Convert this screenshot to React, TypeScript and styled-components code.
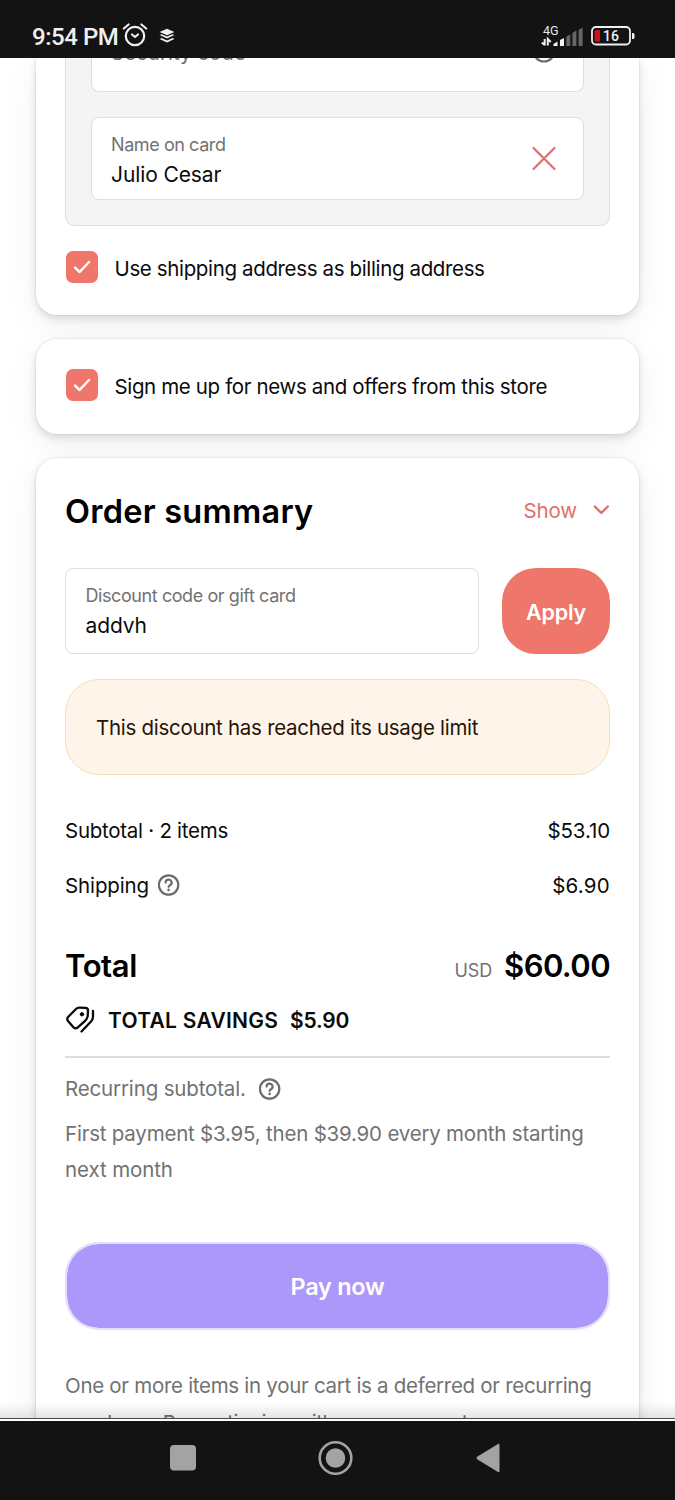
import React from "react";
import styled, { createGlobalStyle } from "styled-components";

const GlobalStyle = createGlobalStyle`
  * { box-sizing: border-box; }
  body { margin: 0; background: #fff; font-family: Inter, "Liberation Sans", sans-serif; color: #0b0b0b; }
  button { font-family: inherit; border: 0; padding: 0; cursor: pointer; }
  svg { display: block; flex: none; }
`;

const Screen = styled.div`
  width: 675px;
  height: 1500px;
  display: flex;
  flex-direction: column;
  overflow: hidden;
  background: #fff;
`;

const StatusBar = styled.header`
  height: 58px;
  flex: none;
  background: #131313;
  color: #f0f0f0;
  display: flex;
  align-items: flex-start;
  justify-content: space-between;
  padding: 22px 40px 0 32px;
  font-family: Roboto, sans-serif;
`;

const StatusGroup = styled.div`
  display: flex;
  align-items: flex-start;
`;

const Clock = styled.span`
  font-size: 24px;
  line-height: 30px;
  font-weight: 500;
  width: 90px;
  white-space: nowrap;
  letter-spacing: -0.45px;
`;

const Content = styled.main`
  position: relative;
  height: 1361px;
  flex: none;
  overflow: hidden;
  display: flex;
  flex-direction: column;
  gap: 24px;
  padding: 0 36px;
  border-bottom: 1px solid #4a4a4a;

  &::after {
    content: "";
    position: absolute;
    left: 0;
    right: 0;
    bottom: 0;
    height: 16px;
    background: linear-gradient(rgba(0, 0, 0, 0), rgba(0, 0, 0, 0.1));
  }
`;

const Card = styled.section<{ $h: number; $cut?: "top" | "bottom" }>`
  height: ${(p) => p.$h}px;
  flex: none;
  background: #fff;
  padding: 0 29px;
  border-radius: ${(p) => (p.$cut === "top" ? "0 0 21px 21px" : p.$cut === "bottom" ? "21px 21px 0 0" : "21px")};
  box-shadow: 0 0 1px 1px rgba(0, 0, 0, 0.05), 0 4px 9px rgba(0, 0, 0, 0.12), 0 8px 36px rgba(0, 0, 0, 0.06);
`;

const CardPanel = styled.div`
  height: 168px;
  padding: 0 25px 25px;
  background: #f4f4f4;
  border: 1px solid #dedede;
  border-top: 0;
  border-radius: 0 0 9px 9px;
  display: flex;
  flex-direction: column;
  gap: 25px;
`;

const Field = styled.div<{ $h: number; $cut?: boolean }>`
  height: ${(p) => p.$h}px;
  flex: ${(p) => (p.$cut ? "none" : "1 1 auto")};
  display: flex;
  align-items: ${(p) => (p.$cut ? "flex-start" : "center")};
  justify-content: space-between;
  padding: 0 26px 0 19px;
  background: #fff;
  border: 1px solid #dedede;
  border-top-width: ${(p) => (p.$cut ? 0 : 1)}px;
  border-radius: ${(p) => (p.$cut ? "0 0 8px 8px" : "8px")};
  overflow: hidden;
`;

const Placeholder = styled.span`
  font-size: 20.5px;
  line-height: 24px;
  margin-top: -17px;
  color: #6d6d6d;
`;

const FieldText = styled.div`
  display: flex;
  flex-direction: column;
  padding-top: 5px;
`;

const FieldLabel = styled.span`
  font-size: 18px;
  line-height: 26px;
  color: #727272;
  letter-spacing: -0.42px;
`;

const FieldValue = styled.span`
  font-size: 21px;
  line-height: 33px;
  letter-spacing: -0.1px;
`;

const CheckRow = styled.label<{ $top: number }>`
  display: flex;
  align-items: center;
  gap: 16.5px;
  padding: ${(p) => p.$top}px 0 0 1px;
`;

const CheckBox = styled.span`
  width: 32px;
  height: 32px;
  border-radius: 7px;
  background: #f0766b;
  display: grid;
  place-items: center;
`;

const CheckLabel = styled.span`
  font-size: 20.5px;
  line-height: 28px;
  padding-top: 4px;
  white-space: nowrap;
  letter-spacing: -0.36px;
`;

const SummaryHead = styled.div`
  height: 110px;
  display: flex;
  justify-content: space-between;
  padding-top: 33px;
`;

const Title = styled.h2`
  margin: 0;
  font-size: 32.5px;
  line-height: 42px;
  font-weight: 600;
  letter-spacing: 0.25px;
  color: #000;
`;

const ShowButton = styled.button`
  height: 38px;
  background: none;
  color: #e0706b;
  font-size: 20.5px;
  letter-spacing: -0.1px;
  display: flex;
  align-items: center;
  gap: 16px;
`;

const DiscountRow = styled.div`
  display: flex;
  gap: 23px;
  height: 86px;
`;

const DiscountField = styled(Field)`
  width: 414px;
  flex: none;
  padding-left: 19.5px;
  padding-bottom: 2px;
`;

const ApplyButton = styled.button`
  flex: 1;
  border-radius: 34px;
  background: #ee766a;
  color: #fff;
  font-size: 21.5px;
  font-weight: 600;
  letter-spacing: -0.2px;
  padding-top: 1px;
`;

const Notice = styled.div`
  height: 96px;
  margin-top: 25px;
  border: 1px solid #f6dfb9;
  border-radius: 34px;
  background: #fff4ea;
  color: #241506;
  display: flex;
  align-items: center;
  padding: 0 30px;
  font-size: 20.5px;
  letter-spacing: -0.28px;
  white-space: nowrap;
`;

const CostRow = styled.div<{ $mt?: number }>`
  height: 30px;
  margin-top: ${(p) => p.$mt ?? 25}px;
  display: flex;
  align-items: center;
  justify-content: space-between;
  font-size: 20.5px;
`;

const CostLabel = styled.span<{ $ls?: number }>`
  display: flex;
  align-items: center;
  gap: 9px;
  letter-spacing: ${(p) => p.$ls ?? 0}px;
`;

const CostValue = styled.span<{ $ls: number }>`
  letter-spacing: ${(p) => p.$ls}px;
`;

const TotalRow = styled.div`
  height: 44px;
  margin-top: 44px;
  display: flex;
  align-items: baseline;
  justify-content: space-between;
  font-weight: 600;
  color: #000;
`;

const TotalLabel = styled.span`
  font-size: 31px;
  line-height: 44px;
  letter-spacing: -0.4px;
`;

const TotalAmount = styled.span`
  display: flex;
  align-items: baseline;
  gap: 12px;
  font-size: 31px;
  line-height: 44px;
  letter-spacing: -0.6px;
`;

const Currency = styled.span`
  font-size: 18px;
  font-weight: 400;
  letter-spacing: -0.1px;
  color: #727272;
`;

const Savings = styled.div`
  height: 30px;
  margin-top: 16px;
  display: flex;
  align-items: center;
  font-size: 21px;
  font-weight: 600;
  white-space: nowrap;
`;

const SavingsLabel = styled.span`
  margin: 2px 12px 0 13px;
  letter-spacing: 0.26px;
`;

const SavingsValue = styled.span`
  margin-top: 2px;
  letter-spacing: -0.2px;
`;

const Divider = styled.hr`
  margin: 22px 0 0;
  border: 0;
  height: 1.5px;
  background: #dedede;
`;

const Recurring = styled.div`
  height: 30px;
  margin-top: 16px;
  display: flex;
  align-items: center;
  gap: 13px;
  font-size: 20.5px;
  letter-spacing: -0.15px;
  color: #727272;
`;

const Paragraph = styled.p<{ $mt: number }>`
  margin: ${(p) => p.$mt}px 0 0;
  font-size: 20.5px;
  line-height: 36px;
  color: #727272;
  white-space: nowrap;
`;

const Line = styled.span<{ $ls: number; $mt?: number }>`
  display: block;
  margin-top: ${(p) => p.$mt ?? 0}px;
  letter-spacing: ${(p) => p.$ls}px;
`;

const PayButton = styled.button`
  display: block;
  width: 545px;
  height: 88px;
  margin-top: 54px;
  border: 2px solid #e4defc;
  border-radius: 34px;
  background: #ac98fa;
  background-clip: padding-box;
  color: #fff;
  font-size: 23.5px;
  font-weight: 600;
  letter-spacing: -0.25px;
`;

const NavBar = styled.nav`
  flex: 1;
  margin-top: 2px;
  background: #131313;
  display: flex;
  align-items: center;
  padding: 0 175px 6px 170px;
  justify-content: space-between;
`;

const Check = () => (
  <svg width="18" height="14" viewBox="0 0 18 14" fill="none" stroke="#fff" strokeWidth="2.5" strokeLinecap="round" strokeLinejoin="round">
    <path d="M2 7.6 6.6 12 16 2" />
  </svg>
);

const Help = () => (
  <svg width="22" height="22" viewBox="0 0 22 22" fill="none" stroke="#6d6d6d" strokeWidth="2.2" strokeLinecap="round" strokeLinejoin="round">
    <circle cx="10.6" cy="11" r="9.7" />
    <path d="M7.6 8.6a3 3 0 1 1 4.4 2.6c-.9.5-1.4.8-1.4 1.6" />
    <circle cx="10.6" cy="15.9" r="1.3" fill="#6d6d6d" stroke="none" />
  </svg>
);

const AlarmIcon = () => (
  <svg width="26" height="26" viewBox="0 0 26 26" fill="none" stroke="#f0f0f0" strokeWidth="2.2" strokeLinecap="round" strokeLinejoin="round">
    <circle cx="13" cy="14" r="9.2" />
    <path d="M10 12.5 13 15l3-2.5M1.8 6.5 6.6 2.5M24.2 6.5l-4.800-4" />
  </svg>
);

const LayersIcon = () => (
  <svg width="16" height="16" viewBox="0 0 16 16" fill="#f0f0f0">
    <path d="M8 .8 15.4 4 8 7.2.6 4z" />
    <path d="M.6 7 2.600 6.200 8 8.600l5.400-2.400 2 .8L8 10.600z" />
    <path d="M.6 11 2.600 10.100 8 12.500l5.400-2.400 2 .9L8 14.600z" />
  </svg>
);

const Signal = () => (
  <svg width="42" height="26" viewBox="0 0 42 26">
    <text x="2" y="10.5" fontFamily="Roboto, sans-serif" fontSize="12.5" fill="#e8e8e8">4G</text>
    <g fill="none" stroke="#f0f0f0" strokeWidth="2">
      <path d="M3.700 15v6.500M.8 18.500l2.900 2.500M6.800 21.500V15l2.900 3" />
    </g>
    <path d="M12.500 22v-2l4-2.500V22z" fill="#f4f4f4" />
    <path d="M19 22v-6l4-2v8z" fill="#f4f4f4" />
    <path d="M25.300 22v-9.500l4-2V22zM31.400 22V9l4-2.500V22zM37.600 22V6l4-2.500V22z" fill="#666" />
  </svg>
);

const Battery = () => (
  <svg width="44" height="20" viewBox="0 0 44 20">
    <rect x="1" y="1" width="38" height="17.500" rx="4" fill="none" stroke="#f0f0f0" strokeWidth="1.800" />
    <path d="M41 7h1a1.500 1.500 0 0 1 1.500 1.500v3A1.500 1.500 0 0 1 42 13h-1z" fill="#f0f0f0" />
    <path d="M5 4h4v11.500H5a1.500 1.500 0 0 1-1.500-1.500V5.500A1.500 1.500 0 0 1 5 4z" fill="#cf1019" />
    <text x="12" y="15" fontFamily="Roboto, sans-serif" fontSize="14" fontWeight="500" fill="#f0f0f0">16</text>
  </svg>
);

const AlarmSlot = styled.span`
  margin: 0 11px 0 0;
`;
const LayerSlot = styled.span`
  margin-top: 6px;
`;
const SignalSlot = styled.span`
  margin: 1.5px 8px 0 0;
`;
const BatterySlot = styled.span`
  margin-top: 4px;
`;
const InfoSlot = styled.span`
  margin: -19px 0 0;
`;

export default function App() {
  return (
    <Screen>
      <GlobalStyle />
      <StatusBar>
        <StatusGroup>
          <Clock>9:54 PM</Clock>
          <AlarmSlot><AlarmIcon /></AlarmSlot>
          <LayerSlot><LayersIcon /></LayerSlot>
        </StatusGroup>
        <StatusGroup>
          <SignalSlot><Signal /></SignalSlot>
          <BatterySlot><Battery /></BatterySlot>
        </StatusGroup>
      </StatusBar>

      <Content>
        <Card $h={257} $cut="top">
          <CardPanel>
            <Field $h={34} $cut>
              <Placeholder>Security code</Placeholder>
              <InfoSlot>
                <svg width="26" height="24" viewBox="0 0 26 24" fill="none" stroke="#6d6d6d" strokeWidth="2.2">
                  <circle cx="13" cy="12" r="10.5" />
                </svg>
              </InfoSlot>
            </Field>
            <Field $h={84}>
              <FieldText>
                <FieldLabel>Name on card</FieldLabel>
                <FieldValue>Julio Cesar</FieldValue>
              </FieldText>
              <svg width="26" height="26" viewBox="0 0 26 26" stroke="#e0706b" strokeWidth="2.3" strokeLinecap="round">
                <path d="M2.500 2l21 21M23.500 2l-21 21" />
              </svg>
            </Field>
          </CardPanel>
          <CheckRow $top={25}>
            <CheckBox><Check /></CheckBox>
            <CheckLabel>Use shipping address as billing address</CheckLabel>
          </CheckRow>
        </Card>

        <Card $h={95}>
          <CheckRow $top={30}>
            <CheckBox><Check /></CheckBox>
            <CheckLabel>Sign me up for news and offers from this store</CheckLabel>
          </CheckRow>
        </Card>

        <Card $h={970} $cut="bottom">
          <SummaryHead>
            <Title>Order summary</Title>
            <ShowButton>
              Show
              <svg width="17" height="11" viewBox="0 0 17 11" fill="none" stroke="#e0706b" strokeWidth="2.4" strokeLinecap="round" strokeLinejoin="round">
                <path d="M1.800 1.500l6.500 6.500 6.500-6.500" />
              </svg>
            </ShowButton>
          </SummaryHead>
          <DiscountRow>
            <DiscountField $h={86}>
              <FieldText>
                <FieldLabel>Discount code or gift card</FieldLabel>
                <FieldValue>addvh</FieldValue>
              </FieldText>
            </DiscountField>
            <ApplyButton>Apply</ApplyButton>
          </DiscountRow>
          <Notice>This discount has reached its usage limit</Notice>
          <CostRow $mt={40}>
            <CostLabel $ls={-0.27}>Subtotal · 2 items</CostLabel>
            <CostValue $ls={-0.1}>$53.10</CostValue>
          </CostRow>
          <CostRow $mt={25}>
            <CostLabel $ls={-0.12}>Shipping <Help /></CostLabel>
            <CostValue $ls={0.25}>$6.90</CostValue>
          </CostRow>
          <TotalRow>
            <TotalLabel>Total</TotalLabel>
            <TotalAmount><Currency>USD</Currency>$60.00</TotalAmount>
          </TotalRow>
          <Savings>
            <svg width="30" height="28" viewBox="0 0 30 28" fill="none" stroke="#0b0b0b" strokeWidth="2.3" strokeLinecap="round" strokeLinejoin="round">
              <path d="M11 4 3.300 11.700Q1.200 13.900 3.200 16.200L8.200 22.100Q10.400 24.600 12.800 22.300L20.100 15.800Q22.500 13.600 22.700 10.800L23 5.500Q23 3 20.500 2.900L14.500 2.700Q12.400 2.600 11 4z" />
              <circle cx="17" cy="9.300" r="1.700" fill="#0b0b0b" strokeWidth="1" />
              <path d="M28 6v5.500q0 3-2 5L16.500 26.500" />
            </svg>
            <SavingsLabel>TOTAL SAVINGS</SavingsLabel>
            <SavingsValue>$5.90</SavingsValue>
          </Savings>
          <Divider />
          <Recurring>Recurring subtotal. <Help /></Recurring>
          <Paragraph $mt={12.5}>
            <Line $ls={-0.21}>First payment $3.95, then $39.90 every month starting</Line>
            <Line $ls={-0.1}>next month</Line>
          </Paragraph>
          <PayButton>Pay now</PayButton>
          <Paragraph $mt={38}>
            <Line $ls={-0.29}>One or more items in your cart is a deferred or recurring</Line>
            <Line $ls={-0.4} $mt={1}>purchase. By continuing with your payment,</Line>
          </Paragraph>
        </Card>
      </Content>

      <NavBar>
        <svg width="26" height="26" viewBox="0 0 26 26"><rect width="26" height="25.5" rx="4" fill="#a3a3a3" /></svg>
        <svg width="36" height="36" viewBox="0 0 36 36">
          <circle cx="17.5" cy="18" r="15.8" fill="none" stroke="#a3a3a3" strokeWidth="2.6" />
          <circle cx="17.5" cy="18" r="9.8" fill="#a3a3a3" />
        </svg>
        <svg width="24" height="30" viewBox="0 0 24 30"><path d="M1.500 13.500 22 1q1.500-.7 1.500 1v26q0 1.700-1.500 1L1.500 16.500q-2-1.500 0-3z" fill="#a3a3a3" /></svg>
      </NavBar>
    </Screen>
  );
}
